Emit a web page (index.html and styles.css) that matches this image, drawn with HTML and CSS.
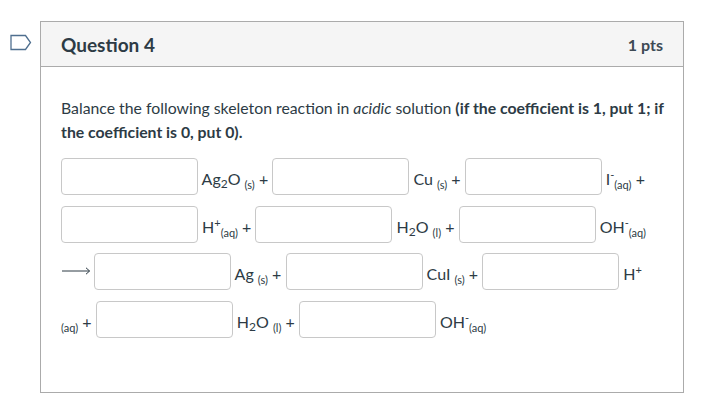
FILE: index.html
```html
<!DOCTYPE html>
<html>
<head>
<meta charset="utf-8">
<link rel="stylesheet" href="styles.css">
</head>
<body>
<div class="page">
  <div class="flagcol">
    <svg class="flag" width="22" height="17" viewBox="0 0 22 17"><path d="M1 1.5 H15.5 L20.5 8.5 L15.5 15.5 H1 Z" fill="none" stroke="#4f6f8f" stroke-width="1.3"/></svg>
  </div>
  <div class="card">
    <div class="head">
      <span class="qtitle">Question 4</span>
      <span class="pts">1 pts</span>
    </div>
    <div class="body">
      <p class="prompt">Balance the following skeleton reaction in <em>acidic</em> solution <b>(if the coefficient is 1, put 1; if the coefficient is 0, put 0).</b></p>
      <div class="eq">
        <div class="line">
          <input class="coef" type="text"><span class="txt"> Ag<sub>2</sub>O <sub class="st">(s)</sub> + </span><input class="coef" type="text"><span class="txt"> Cu <sub class="st">(s)</sub> + </span><input class="coef" type="text"><span class="txt"> I<sup class="ch">-</sup><sub class="st">(aq)</sub> +</span>
        </div>
        <div class="line">
          <input class="coef" type="text"><span class="txt"> H<sup class="ch">+</sup><sub class="st">(aq)</sub> + </span><input class="coef" type="text"><span class="txt"> H<sub>2</sub>O <sub class="st">(l)</sub> + </span><input class="coef" type="text"><span class="txt"> OH<sup class="ch">-</sup><sub class="st">(aq)</sub></span>
        </div>
        <div class="line">
          <svg class="arrow" width="30" height="10" viewBox="0 0 30 10"><path d="M1 5 H28.5 M25 1.8 L28.6 5 L25 8.2" fill="none" stroke="#2d3b45" stroke-width="1"/></svg><input class="coef" type="text"><span class="txt"> Ag <sub class="st">(s)</sub> + </span><input class="coef" type="text"><span class="txt"> CuI <sub class="st">(s)</sub> + </span><input class="coef" type="text"><span class="txt"> H<sup class="ch">+</sup></span>
        </div>
        <div class="line">
          <span class="txt"><sub class="st">(aq)</sub> + </span><input class="coef" type="text"><span class="txt"> H<sub>2</sub>O <sub class="st">(l)</sub> + </span><input class="coef" type="text"><span class="txt"> OH<sup class="ch">-</sup><sub class="st">(aq)</sub></span>
        </div>
      </div>
    </div>
  </div>
</div>
</body>
</html>
```
FILE: styles.css
```css
html, body {
  margin: 0;
  padding: 0;
  background: #ffffff;
}
body {
  font-family: Lato, "Open Sans", "Liberation Sans", sans-serif;
  color: #2d3b45;
}
.page {
  display: flex;
  padding-top: 21px;
}
.flagcol {
  width: 40px;
  flex: none;
}
.flag {
  display: block;
  margin: 13px 0 0 10px;
}
.card {
  width: 644px;
  box-sizing: border-box;
  border: 1px solid #ababab;
  height: 372px;
}
.head {
  height: 44px;
  background: #f5f5f5;
  border-bottom: 1px solid #ababab;
  display: flex;
  align-items: center;
  justify-content: space-between;
  padding: 0 20px;
}
.qtitle {
  font-size: 19px;
  font-weight: 700;
}
.pts {
  font-size: 16px;
  font-weight: 700;
  color: #3d4a54;
}
.body {
  padding: 29px 16px 0 20px;
}
.prompt {
  margin: 0;
  font-size: 15.8px;
  line-height: 24px;
}
.prompt b {
  font-weight: 700;
}
.eq {
  margin-top: 14px;
  display: flex;
  flex-direction: column;
  gap: 10.7px;
}
.line {
  display: flex;
  align-items: flex-start;
  height: 37px;
  white-space: nowrap;
}
.coef {
  width: 137px;
  height: 37px;
  box-sizing: border-box;
  border: 1px solid #c8c8c8;
  border-radius: 4px;
  margin: 0;
  padding: 0 8px;
  background: #fff;
  flex: none;
}
.txt {
  white-space: pre;
  font-size: 16px;
  line-height: 37px;
  padding-top: 2px;
}
.txt sub {
  font-size: 12px;
  line-height: 0;
  vertical-align: -3px;
}
.txt sub.st {
  font-size: 11px;
  vertical-align: -4px;
}
.txt sup.ch {
  font-size: 11px;
  line-height: 0;
  vertical-align: 6px;
}
.arrow {
  display: block;
  margin: 13px 3px 0 0;
  flex: none;
}
```
